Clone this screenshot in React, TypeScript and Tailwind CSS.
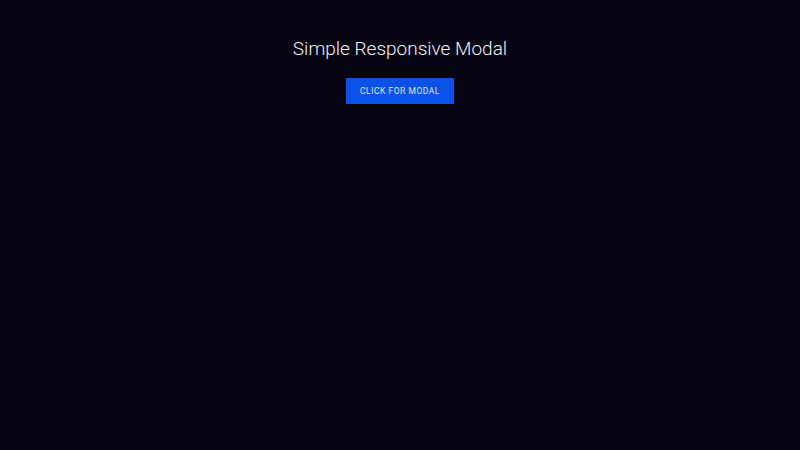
export default function App() {
  return (
    <div className="min-h-[450px] w-full bg-[#070514] flex flex-col items-center pt-[37px]" style={{ fontFamily: "Roboto, 'Liberation Sans', sans-serif" }}>
      <h1 className="text-[19px] leading-[23px] font-light text-[#f2f2f5]">Simple Responsive Modal</h1>
      <button className="mt-[18px] w-[108px] h-[26px] bg-[#0b52e8] text-[#dfe7ff] text-[8.5px] tracking-[0.06em] uppercase shadow-[0_4px_12px_rgba(0,0,0,0.5)]">
        Click for modal
      </button>
    </div>
  );
}
